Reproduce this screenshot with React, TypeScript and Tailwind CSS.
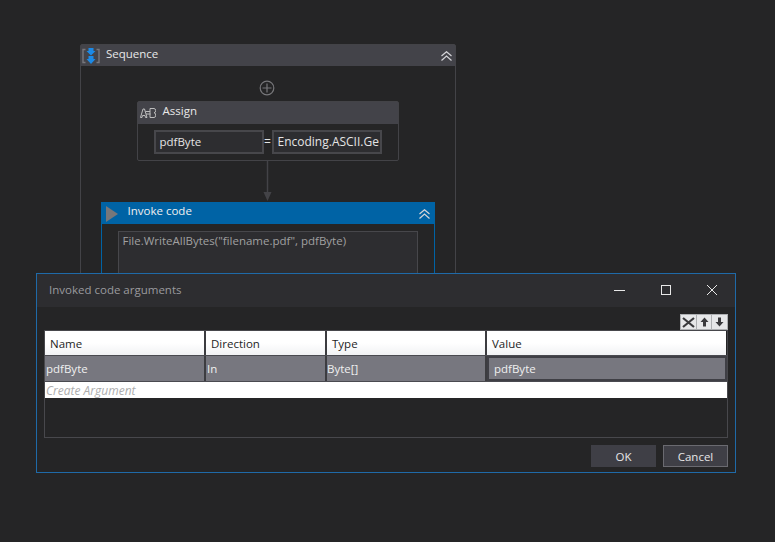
const font = 'font-["Open_Sans","Noto_Sans",sans-serif]';

function DoubleChevron() {
  return (
    <svg width="11" height="10" viewBox="0 0 11 10" fill="none" stroke="#d4d4d8" strokeWidth="1.2">
      <path d="M0.5 5 L5.5 0.7 L10.5 5" />
      <path d="M0.5 9.5 L5.5 5 L10.5 9.5" />
    </svg>
  );
}

function SequenceIcon() {
  return (
    <svg width="18" height="18" viewBox="0 0 18 18" fill="none">
      <path d="M3.5 2.5 H1 V15.5 H3.5" stroke="#77777d" strokeWidth="1.4" />
      <path d="M14.5 2.5 H17 V15.5 H14.5" stroke="#77777d" strokeWidth="1.4" />
      <path d="M6.5 1 H11.5 V4 H13.5 L9 8.5 L4.5 4 H6.5 Z" fill="#1c8ae6" />
      <path d="M6.5 9 H11.5 V12 H13.5 L9 17 L4.5 12 H6.5 Z" fill="#1c8ae6" />
    </svg>
  );
}

function AssignIcon() {
  return (
    <svg width="16" height="10" viewBox="0 0 16 10" fill="none" stroke="#bdbdbd" strokeWidth="1">
      <path d="M0.5 9.5 L3 1 H4.5 L7 9.5 H5.5 L5 7.5 H2.5 L2 9.5 Z" />
      <path d="M5.5 3.5 H10" />
      <path d="M6 6 H10.5" />
      <path d="M10 0.5 H14 A1.5 2 0 0 1 14 4.8 A1.7 2.3 0 0 1 14 9.5 H10 Z" />
    </svg>
  );
}

function GridToolbar() {
  return (
    <div className="flex justify-end h-4 w-full">
      <div className="flex w-12 h-4 bg-[#aeb0b3] gap-px p-px">
        <div className="flex-1 bg-[#e6e7e9] flex items-center justify-center">
          <svg width="13" height="11" viewBox="0 0 13 11" stroke="#3a3a3d" strokeWidth="2.2" fill="none">
            <path d="M1 1 L12 10 M12 1 L1 10" />
          </svg>
        </div>
        <div className="flex-1 bg-[#e6e7e9] flex items-center justify-center">
          <svg width="9" height="10" viewBox="0 0 9 10" fill="#3a3a3d">
            <path d="M4.5 0.5 L8.5 5 H6 V9.5 H3 V5 H0.5 Z" />
          </svg>
        </div>
        <div className="flex-1 bg-[#e6e7e9] flex items-center justify-center">
          <svg width="9" height="10" viewBox="0 0 9 10" fill="#3a3a3d">
            <path d="M3 0.5 H6 V5 H8.5 L4.5 9.5 L0.5 5 H3 Z" />
          </svg>
        </div>
      </div>
    </div>
  );
}

function HeaderCell({ label, width }: { label: string; width: string }) {
  return (
    <div className={`${width} shrink-0 h-full flex items-center pl-[5px] pt-[2px] border-r-2 border-[#3c3c40] text-[#1e1e1e] bg-gradient-to-b from-white from-50% to-[#f1f2f4]`}>
      {label}
    </div>
  );
}

function ArgumentsDialog() {
  return (
    <div className="absolute left-[36px] top-[273px] w-[700px] h-[200px] border border-[#1f6aa8] bg-[#252526] flex flex-col">
      <div className="h-[33px] shrink-0 bg-[#2d2d30] flex items-center pl-3 pb-[2px] text-[11.5px] text-[#9a9a9e]">
        <span className="flex-1">Invoked code arguments</span>
        <div className="flex items-center">
          <svg width="46" height="12" viewBox="0 0 46 12" stroke="#e8e8e8" strokeWidth="1" fill="none">
            <path d="M0 6.5 H11" />
          </svg>
          <svg width="12" height="12" viewBox="0 0 12 12" stroke="#e8e8e8" strokeWidth="1" fill="none" className="mr-[34px]">
            <rect x="1.5" y="1.5" width="9" height="9" />
          </svg>
          <svg width="12" height="12" viewBox="0 0 12 12" stroke="#e8e8e8" strokeWidth="1" fill="none" className="mr-[17px]">
            <path d="M1 1 L11 11 M11 1 L1 11" />
          </svg>
        </div>
      </div>
      <div className="flex-1 flex flex-col px-[7px] pt-[7px]">
        <GridToolbar />
        <div className="h-[108px] border border-[#48484c] flex flex-col text-[11.5px]">
          <div className="h-[24px] flex shrink-0 pr-[1px]">
            <HeaderCell label="Name" width="w-[161px]" />
            <HeaderCell label="Direction" width="w-[121px]" />
            <HeaderCell label="Type" width="w-[160px]" />
            <div className="flex-1 h-full flex items-center pl-[5px] pt-[2px] text-[#1e1e1e] bg-gradient-to-b from-white from-50% to-[#f1f2f4]">
              Value
            </div>
          </div>
          <div className="h-[27px] flex shrink-0 bg-[#77777f] text-[#f0f0f0] border-y border-[#4a4a50]">
            <div className="w-[161px] flex items-center pl-[1px] border-r-2 border-[#3c3c40]">pdfByte</div>
            <div className="w-[121px] flex items-center pl-[1px] border-r-2 border-[#3c3c40]">In</div>
            <div className="w-[160px] flex items-center border-r-2 border-[#3c3c40]">Byte[]</div>
            <div className="flex-1 flex items-center pl-[5px] border-2 border-[#3f3f45]">pdfByte</div>
          </div>
          <div className="h-[16px] shrink-0 bg-white flex items-center text-[#adadad] italic pl-[1px] pt-[2px] text-[12px]">
            Create Argument
          </div>
        </div>
        <div className="flex justify-end gap-[7px] mt-[7px] text-[11.5px] text-[#e6e6e6]">
          <button className="w-[65px] h-[22px] bg-[#3f3f46] pt-[2px]">OK</button>
          <button className="w-[65px] h-[22px] bg-[#3f3f46] pt-[1px] border border-[#6a6a70]">Cancel</button>
        </div>
      </div>
    </div>
  );
}

export default function App() {
  return (
    <div className={`relative w-[775px] h-[542px] overflow-hidden bg-[#252526] ${font}`}>
      <div className="pt-[44px] pl-[80px]">
        {/* Sequence */}
        <div className="w-[376px] h-[300px] border border-[#434347] rounded-t-[2px] flex flex-col items-center">
          <div className="w-full h-[21px] shrink-0 bg-[#434349] flex items-center pl-[1px] pr-[3px] text-[11.5px] text-[#e8e8e8]">
            <SequenceIcon />
            <span className="ml-[6px] flex-1 mt-[-4px]">Sequence</span>
            <DoubleChevron />
          </div>
          <svg width="16" height="16" viewBox="0 0 16 16" fill="none" stroke="#77777a" strokeWidth="1.2" className="mt-[14px] ml-[-3px]">
            <circle cx="8" cy="8" r="6.8" />
            <path d="M8 3.5 V12.5 M3.5 8 H12.5" />
          </svg>
          {/* Assign */}
          <div className="w-[262px] h-[60px] mt-[5px] ml-[-1px] shrink-0 border border-[#434347] rounded-[2px] flex flex-col">
            <div className="h-[22px] bg-[#434349] flex items-center pl-[2px] text-[11.5px] text-[#e8e8e8]">
              <AssignIcon />
              <span className="ml-[7px] mt-[-4px]">Assign</span>
            </div>
            <div className="flex items-center pl-[16px] mt-[6px] text-[12px] text-[#e4e4e4]">
              <div className="w-[110px] h-[24px] border-2 border-[#47474b] bg-[#2d2d30] flex items-center pl-[4px] text-[11.5px]">pdfByte</div>
              <span className="w-[8px] text-center">=</span>
              <div className="w-[110px] h-[24px] border-2 border-[#47474b] bg-[#2d2d30] flex items-center pl-[4px] overflow-hidden whitespace-nowrap">Encoding.ASCII.Ge</div>
            </div>
          </div>
          <svg width="9" height="41" viewBox="0 0 9 41" className="shrink-0 ml-[-1px]">
            <path d="M4.5 0 V32" stroke="#434347" strokeWidth="1.5" />
            <path d="M0.5 31 H8.5 L4.5 40 Z" fill="#434347" />
          </svg>
          {/* Invoke code */}
          <div className="w-[334px] h-[100px] ml-[-1px] shrink-0 border border-[#0063a5] flex flex-col">
            <div className="h-[21px] shrink-0 bg-[#0063a5] flex items-center pl-[4px] pr-[4px] text-[11.5px] text-[#f0f0f0]">
              <svg width="12" height="16" viewBox="0 0 12 16"><path d="M0 0 L12 8 L0 16 Z" fill="#77777a" /></svg>
              <span className="ml-[10px] flex-1 mt-[-6px]">Invoke code</span>
              <DoubleChevron />
            </div>
            <div className="mx-[16px] mt-[7px] h-[60px] border border-[#47474b] bg-[#2d2d30] text-[11.5px] text-[#a0a0a0] pl-[4px]">
              File.WriteAllBytes("filename.pdf", pdfByte)
            </div>
          </div>
        </div>
      </div>
      <ArgumentsDialog />
    </div>
  );
}
